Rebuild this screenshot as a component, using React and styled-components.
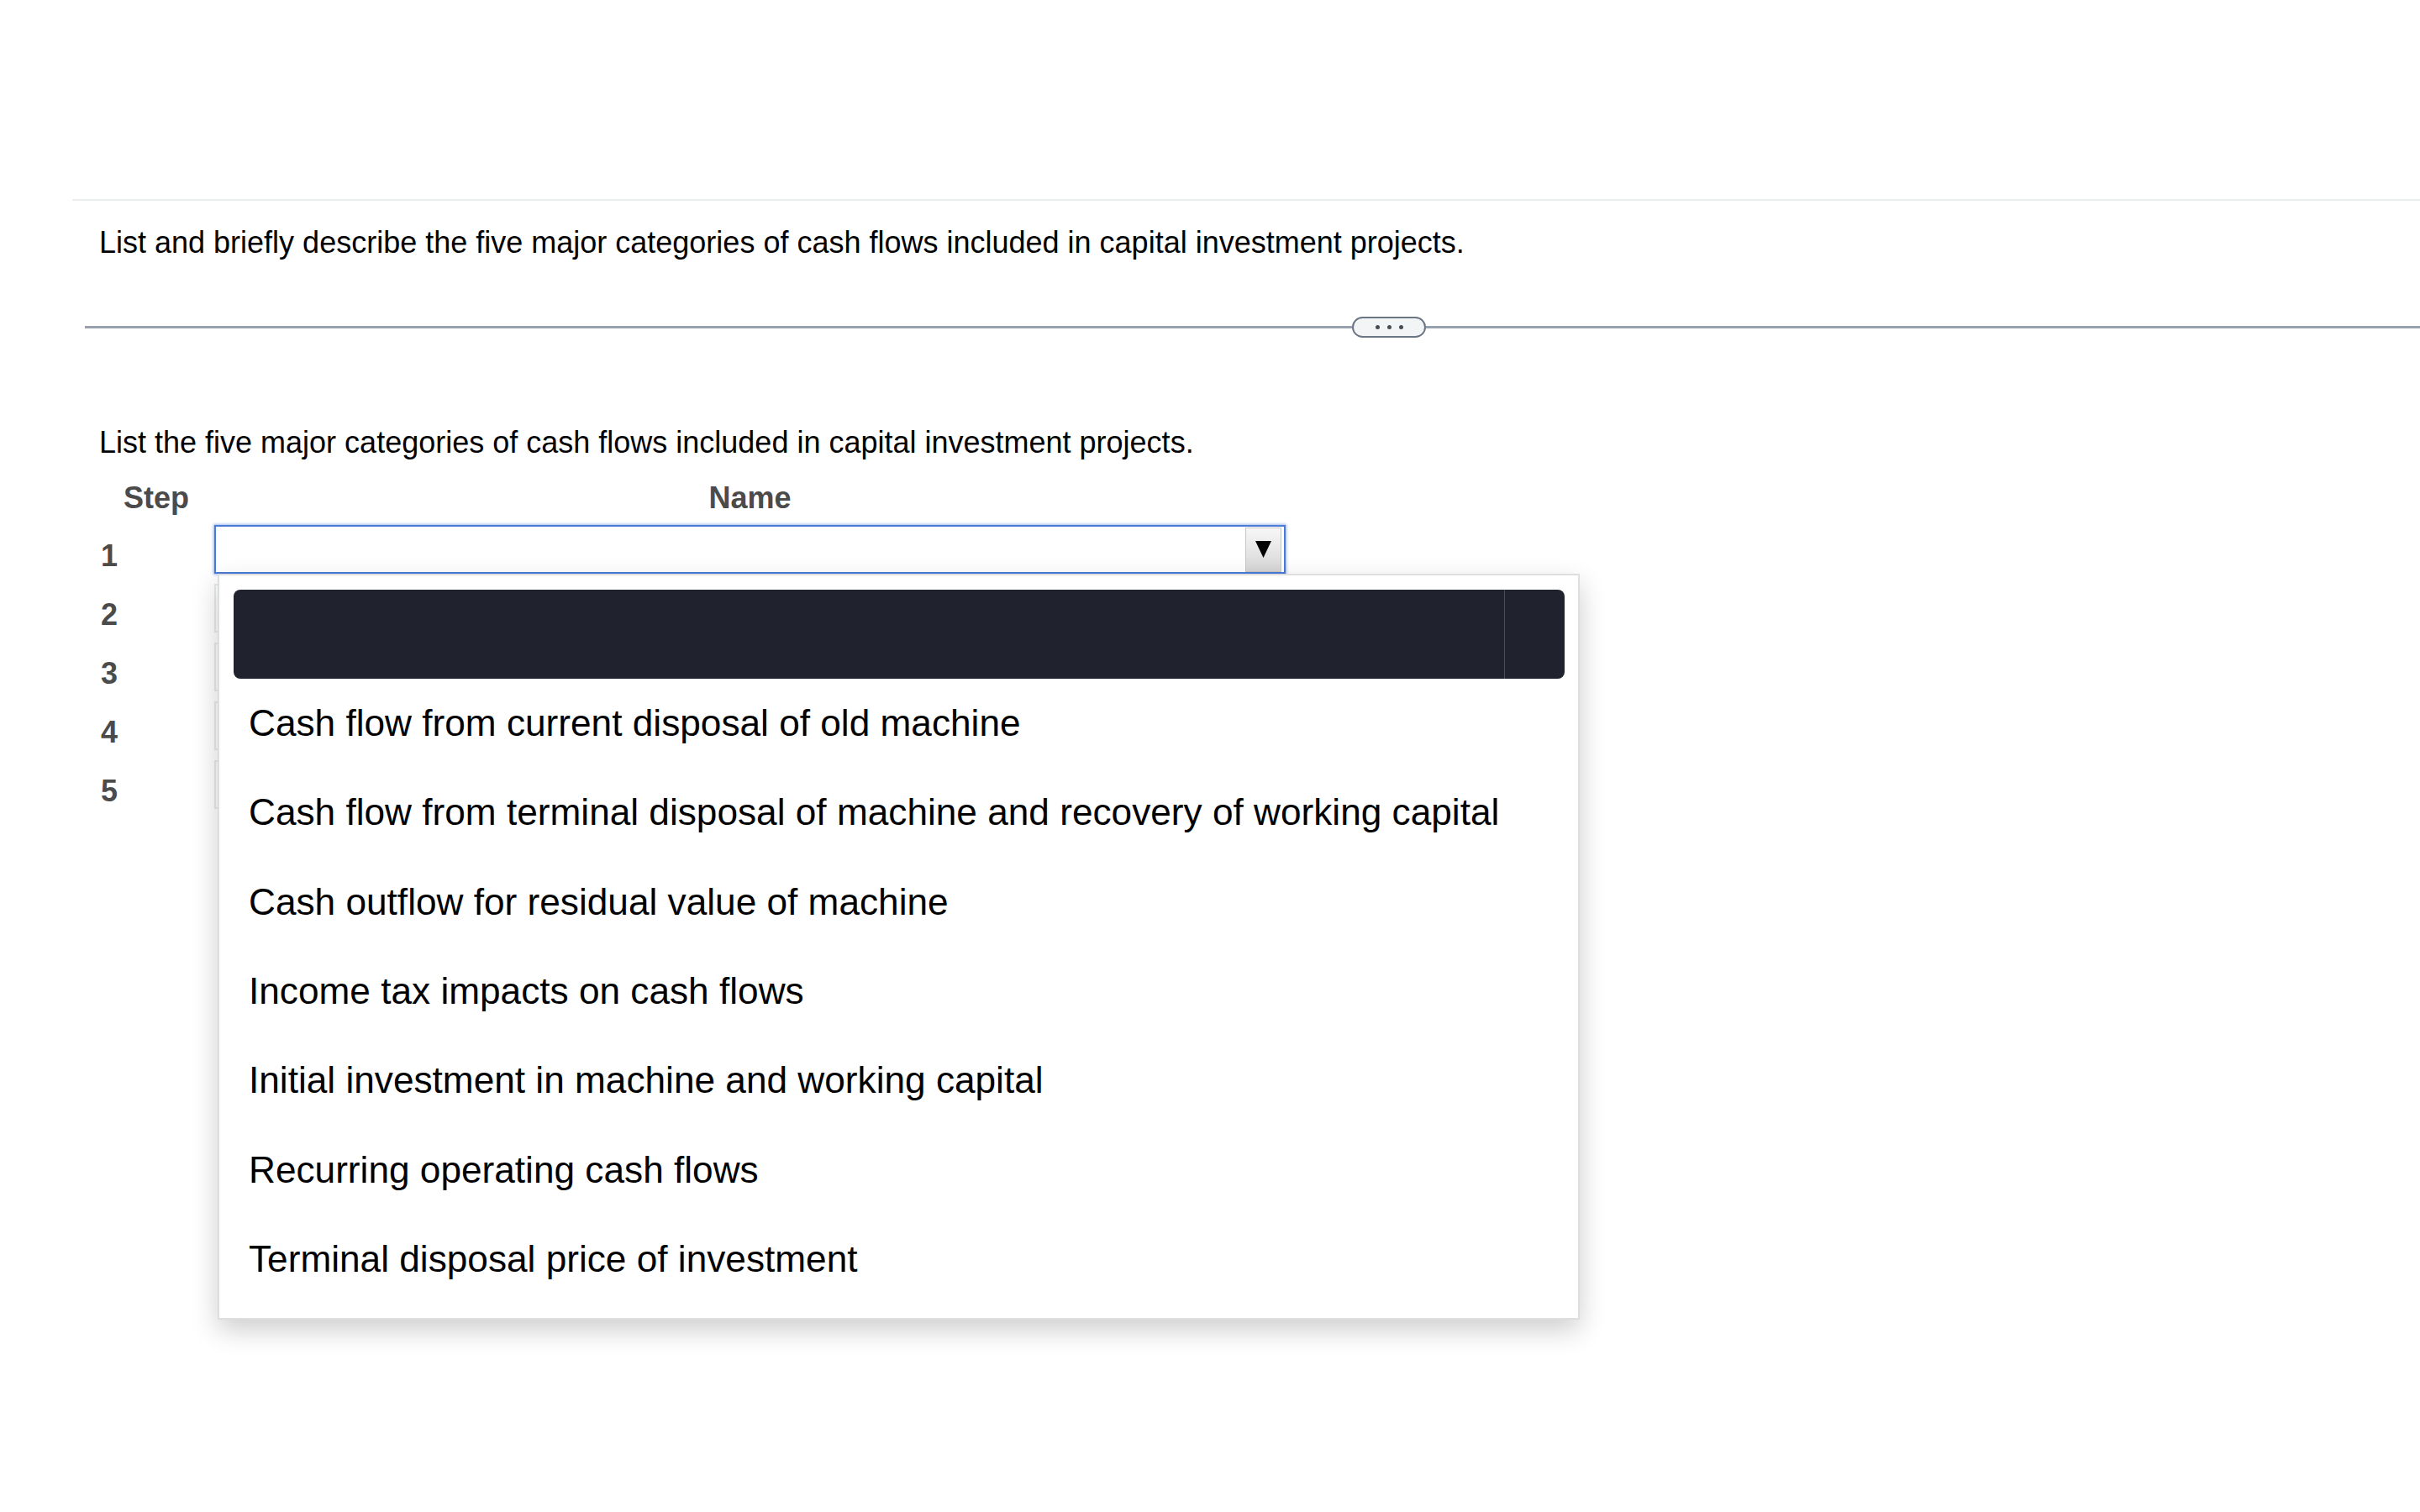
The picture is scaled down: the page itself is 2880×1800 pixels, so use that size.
import React from "react";
import styled, { createGlobalStyle } from "styled-components";

const Global = createGlobalStyle`
  html, body { margin: 0; padding: 0; background: #ffffff; }
  body { font-family: "Liberation Sans", Arial, Helvetica, sans-serif; color: #000; overflow: hidden; }
  * { box-sizing: border-box; }
`;

const Page = styled.div`
  width: 2880px;
  height: 1800px;
  padding-top: 237px;
`;

const TopRule = styled.div`
  margin-left: 86px;
  height: 2px;
  background: #eaefee;
`;

const Prompt = styled.p`
  margin: ${(p) => p.$top}px 0 0 118px;
  font-size: 36px;
  line-height: 41px;
  color: #000;
`;

const DividerRow = styled.div`
  display: flex;
  align-items: center;
  height: 25px;
  margin: 68px 0 0 101px;
`;

const Line = styled.div`
  height: 3px;
  background: #98a1ad;
  flex: ${(p) => (p.$grow ? "1 1 auto" : `0 0 ${p.$w}px`)};
`;

const Pill = styled.button`
  flex: 0 0 88px;
  height: 25px;
  border: 2px solid #6b7684;
  border-radius: 13px;
  background: #f3f4f6;
  display: flex;
  align-items: center;
  justify-content: center;
  gap: 9px;
  padding: 0;
`;

const Dot = styled.span`
  width: 5px;
  height: 5px;
  border-radius: 50%;
  background: #474c55;
`;

const Table = styled.div`
  margin: 25px 0 0 105px;
  display: grid;
  grid-template-columns: 150px 1275px;
  grid-template-rows: 53px;
  grid-auto-rows: 70px;
`;

const HeadCell = styled.div`
  font-size: 36px;
  line-height: 41px;
  font-weight: bold;
  color: #4b4b4b;
  padding-left: ${(p) => p.$pl || 0}px;
  text-align: ${(p) => p.$align || "left"};
`;

const Num = styled.div`
  font-size: 36px;
  line-height: 41px;
  font-weight: bold;
  color: #4b4b4b;
  padding: 16px 0 0 15px;
`;

const SelectWrap = styled.div`
  position: relative;
`;

const SelectBox = styled.div`
  height: 58px;
  border: 2px solid ${(p) => (p.$focus ? "#4a7bd9" : "#e6ebed")};
  box-shadow: ${(p) => (p.$focus ? "0 0 3px 1px rgba(74,123,217,0.55)" : "none")};
  background: #fff;
  display: flex;
  justify-content: flex-end;
  align-items: center;
  padding-right: 3px;
`;

const ArrowBtn = styled.div`
  width: 43px;
  height: 53px;
  border: 1px solid #c6c6c6;
  background: linear-gradient(#f7f7f7, #d6d6d6);
  display: flex;
  align-items: center;
  justify-content: center;
`;

const Menu = styled.div`
  position: absolute;
  top: 58px;
  left: 4px;
  width: 1621px;
  background: #fff;
  border: 2px solid #dedede;
  box-shadow: 0 12px 30px rgba(0, 0, 0, 0.2);
  padding: 17px 16px 17px 17px;
  z-index: 5;
`;

const Highlight = styled.div`
  height: 106px;
  background: #20232e;
  border-radius: 8px;
  display: flex;
  justify-content: flex-end;
`;

const HighlightEnd = styled.div`
  width: 72px;
  border-left: 1px solid #4a4e5a;
`;

const Option = styled.div`
  height: 106.3px;
  display: flex;
  align-items: center;
  padding-left: 18px;
  font-size: 44.2px;
  color: #000;
  white-space: nowrap;
`;

const options = [
  "Cash flow from current disposal of old machine",
  "Cash flow from terminal disposal of machine and recovery of working capital",
  "Cash outflow for residual value of machine",
  "Income tax impacts on cash flows",
  "Initial investment in machine and working capital",
  "Recurring operating cash flows",
  "Terminal disposal price of investment",
];

export default function App() {
  return (
    <Page>
      <Global />
      <TopRule />
      <Prompt $top={29}>
        List and briefly describe the five major categories of cash flows included in capital investment projects.
      </Prompt>
      <DividerRow>
        <Line $w={1508} />
        <Pill aria-label="more">
          <Dot />
          <Dot />
          <Dot />
        </Pill>
        <Line $grow />
      </DividerRow>
      <Prompt $top={104}>List the five major categories of cash flows included in capital investment projects.</Prompt>
      <Table>
        <HeadCell $pl={42}>Step</HeadCell>
        <HeadCell $align="center">Name</HeadCell>
        {[1, 2, 3, 4, 5].map((n) => (
          <React.Fragment key={n}>
            <Num>{n}</Num>
            <SelectWrap>
              <SelectBox $focus={n === 1}>
                <ArrowBtn>
                  <svg width="19" height="20" viewBox="0 0 19 20">
                    <path d="M0 0 H19 L9.5 20 Z" fill="#000" />
                  </svg>
                </ArrowBtn>
              </SelectBox>
              {n === 1 && (
                <Menu>
                  <Highlight>
                    <HighlightEnd />
                  </Highlight>
                  {options.map((o) => (
                    <Option key={o}>{o}</Option>
                  ))}
                </Menu>
              )}
            </SelectWrap>
          </React.Fragment>
        ))}
      </Table>
    </Page>
  );
}
